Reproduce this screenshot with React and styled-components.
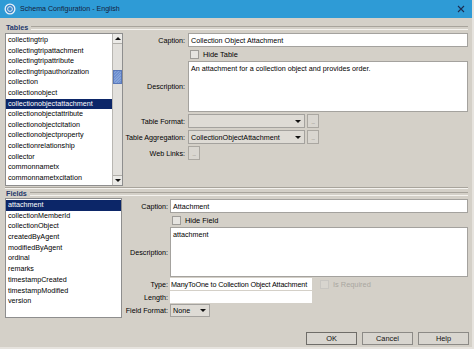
import React from "react";
import styled, { createGlobalStyle } from "styled-components";

const Global = createGlobalStyle`
  html, body { margin: 0; padding: 0; background: #d4d0c8; }
  body { font-family: "Liberation Sans", Arial, sans-serif; font-size: 7.2px; color: #000; }
  * { box-sizing: border-box; }
`;

const Window = styled.div`
  width: 474px;
  height: 349px;
  background: #d4d0c8;
  display: flex;
  flex-direction: column;
  border-right: 2px solid #e6e3de;
  border-bottom: 2px solid #e6e3de;
  overflow: hidden;
`;

const TitleBar = styled.div`
  height: 18px;
  background: #2e9bd6;
  display: flex;
  align-items: center;
  padding: 0 4px;
  gap: 4px;
  flex: none;
`;

const Title = styled.div`
  flex: 1;
  font-size: 7.1px;
  color: #14223c;
  white-space: nowrap;
`;

const CloseBox = styled.div`
  width: 12px;
  height: 12px;
  display: flex;
  align-items: center;
  justify-content: center;
  margin-right: 1px;
`;

const Body = styled.div`
  padding: 3px 4px 0 5px;
  display: flex;
  flex-direction: column;
`;

const SectionHeader = styled.div`
  height: ${(p) => p.$h || 12}px;
  display: flex;
  align-items: center;
  gap: 3px;
  font-weight: bold;
  color: #23386b;
  padding-left: 1px;
  &::after {
    content: "";
    flex: 1;
    height: 2px;
    border-top: 1px solid #a8a49c;
    border-bottom: 1px solid #f4f2ee;
    margin-top: 1px;
  }
`;

const Pane = styled.div`
  display: flex;
  height: ${(p) => p.$h}px;
`;

const ListBox = styled.div`
  width: ${(p) => p.$w}px;
  height: 100%;
  background: #fff;
  border: 1px solid #8e8e8e;
  display: flex;
  flex: none;
`;

const ListRows = styled.div`
  flex: 1;
  padding-top: 1px;
  overflow: hidden;
`;

const Row = styled.div`
  height: ${(p) => p.$rh}px;
  line-height: ${(p) => p.$rh}px;
  padding-left: 2px;
  white-space: nowrap;
  background: ${(p) => (p.$sel ? "#0c2668" : "transparent")};
  color: ${(p) => (p.$sel ? "#fff" : "#000")};
`;

const ScrollBar = styled.div`
  width: 10px;
  background: #e2e0dc;
  border-left: 1px solid #b8b6b2;
  display: flex;
  flex-direction: column;
`;

const ScrollBtn = styled.div`
  height: 10px;
  display: flex;
  align-items: center;
  justify-content: center;
  background: #ebeae7;
  border-bottom: ${(p) => (p.$up ? "1px solid #b0aea9" : "none")};
  border-top: ${(p) => (p.$up ? "none" : "1px solid #b0aea9")};
`;

const ScrollTrack = styled.div`
  flex: 1;
  padding-top: 26px;
`;

const Thumb = styled.div`
  height: 14px;
  background: repeating-linear-gradient(135deg, #6f90d0 0 1px, #86a4da 1px 2px);
  border: 1px solid #5a78b8;
`;

const Form = styled.div`
  display: grid;
  grid-template-columns: ${(p) => p.$label}px 1fr;
  column-gap: ${(p) => p.$gap}px;
  grid-template-rows: ${(p) => p.$rows};
  row-gap: ${(p) => p.$rg}px;
  flex: 1;
  align-content: start;
  padding-top: ${(p) => p.$pt || 0}px;
`;

const Label = styled.div`
  text-align: right;
  white-space: nowrap;
  align-self: center;
  color: #000;
`;

const Cell = styled.div`
  display: flex;
  align-items: center;
  gap: 2px;
  min-width: 0;
`;

const TextField = styled.div`
  background: #fff;
  border: 1px solid ${(p) => (p.$flat ? "#fff" : "#a4a29e")};
  height: 100%;
  width: ${(p) => (p.$w ? p.$w + "px" : "100%")};
  padding: 0 ${(p) => (p.$flat ? 0 : 2)}px;
  letter-spacing: ${(p) => (p.$flat ? "-0.12px" : "normal")};
  display: flex;
  align-items: center;
  white-space: nowrap;
  overflow: hidden;
  flex: none;
`;

const TextArea = styled.div`
  background: #fff;
  border: 1px solid #a4a29e;
  height: 100%;
  width: 100%;
  padding: 2px 2px;
`;

const Check = styled.span`
  width: 9px;
  height: 9px;
  border: 1px solid ${(p) => (p.$disabled ? "#c8c6c2" : "#9e9c98")};
  background: ${(p) => (p.$disabled ? "#d8d5cf" : "#e6e4e0")};
  display: inline-block;
  flex: none;
  margin-left: ${(p) => p.$ml || 0}px;
`;

const CheckText = styled.span`
  font-size: 7.4px;
  color: ${(p) => (p.$disabled ? "#a9a6a0" : "#000")};
  margin-left: 2px;
  white-space: nowrap;
`;

const Combo = styled.div`
  width: ${(p) => p.$w}px;
  height: 100%;
  border: 1px solid #a4a29e;
  background: #dedbd5;
  display: flex;
  align-items: center;
  padding-left: 2px;
  white-space: nowrap;
`;

const ComboText = styled.span`
  flex: 1;
`;

const Arrow = styled.span`
  width: 0;
  height: 0;
  border-left: 3px solid transparent;
  border-right: 3px solid transparent;
  border-top: ${(p) => (p.$up ? "none" : "3px solid #111")};
  border-bottom: ${(p) => (p.$up ? "3px solid #111" : "none")};
  margin-right: ${(p) => p.$mr || 0}px;
`;

const DotsBtn = styled.div`
  width: 12px;
  height: 100%;
  border: 1px solid #aaa7a1;
  background: #d9d6d0;
  color: #8a8781;
  display: flex;
  align-items: flex-end;
  justify-content: center;
  padding-bottom: 2px;
  font-size: 6px;
  line-height: 6px;
  letter-spacing: -0.5px;
`;

const Splitter = styled.div`
  height: 2px;
  margin: 1px 0 0 0;
  border-top: 1px solid #a8a49c;
  border-bottom: 1px solid #f4f2ee;
`;

const ButtonBar = styled.div`
  display: flex;
  justify-content: flex-end;
  gap: 5px;
  padding: 0 3px 0 0;
  margin-top: 14px;
`;

const Button = styled.div`
  width: 51px;
  height: 13px;
  border: 1px solid ${(p) => (p.$default ? "#6f6d69" : "#8c8a86")};
  background: #d8d5cf;
  display: flex;
  align-items: center;
  justify-content: center;
  font-size: 7.4px;
  color: #111;
`;

const tables = [
  "collectingtrip",
  "collectingtripattachment",
  "collectingtripattribute",
  "collectingtripauthorization",
  "collection",
  "collectionobject",
  "collectionobjectattachment",
  "collectionobjectattribute",
  "collectionobjectcitation",
  "collectionobjectproperty",
  "collectionrelationship",
  "collector",
  "commonnametx",
  "commonnametxcitation",
];

const fields = [
  "attachment",
  "collectionMemberId",
  "collectionObject",
  "createdByAgent",
  "modifiedByAgent",
  "ordinal",
  "remarks",
  "timestampCreated",
  "timestampModified",
  "version",
];

const Logo = () => (
  <svg width="12" height="12" viewBox="0 0 12 12">
    <circle cx="6" cy="6" r="5.5" fill="#e8f2fa" />
    <circle cx="6" cy="6" r="4.2" fill="#3b86c8" />
    <circle cx="6" cy="6" r="2.4" fill="none" stroke="#dbeaf6" strokeWidth="1" />
  </svg>
);

const CloseIcon = () => (
  <svg width="8" height="8" viewBox="0 0 8 8">
    <path d="M1 1 L7 7 M7 1 L1 7" stroke="#1b2d52" strokeWidth="1.1" />
  </svg>
);

export default function App() {
  return (
    <>
      <Global />
      <Window>
        <TitleBar>
          <Logo />
          <Title>Schema Configuration - English</Title>
          <CloseBox>
            <CloseIcon />
          </CloseBox>
        </TitleBar>
        <Body>
          <SectionHeader $h={12}>Tables</SectionHeader>
          <Pane $h={153}>
            <ListBox $w={118}>
              <ListRows>
                {tables.map((t, i) => (
                  <Row key={t} $rh={10.6} $sel={i === 6}>
                    {t}
                  </Row>
                ))}
              </ListRows>
              <ScrollBar>
                <ScrollBtn $up>
                  <Arrow $up />
                </ScrollBtn>
                <ScrollTrack>
                  <Thumb />
                </ScrollTrack>
                <ScrollBtn>
                  <Arrow />
                </ScrollBtn>
              </ScrollBar>
            </ListBox>
            <Form $label={62} $gap={3} $rg={2} $rows="14px 10px 51px 14px 14px 14px">
              <Label>Caption:</Label>
              <Cell>
                <TextField>Collection Object Attachment</TextField>
              </Cell>
              <div />
              <Cell>
                <Check $ml={2} />
                <CheckText>Hide Table</CheckText>
              </Cell>
              <Label>Description:</Label>
              <Cell>
                <TextArea>An attachment for a collection object and provides order.</TextArea>
              </Cell>
              <Label>Table Format:</Label>
              <Cell>
                <Combo $w={117}>
                  <ComboText />
                  <Arrow $mr={3} />
                </Combo>
                <DotsBtn>...</DotsBtn>
              </Cell>
              <Label>Table Aggregation:</Label>
              <Cell>
                <Combo $w={117}>
                  <ComboText>CollectionObjectAttachment</ComboText>
                  <Arrow $mr={3} />
                </Combo>
                <DotsBtn>...</DotsBtn>
              </Cell>
              <Label>Web Links:</Label>
              <Cell>
                <DotsBtn>...</DotsBtn>
              </Cell>
            </Form>
          </Pane>
          <Splitter />
          <SectionHeader $h={9}>Fields</SectionHeader>
          <Pane $h={120}>
            <ListBox $w={117}>
              <ListRows>
                {fields.map((f, i) => (
                  <Row key={f} $rh={10.7} $sel={i === 0}>
                    {f}
                  </Row>
                ))}
              </ListRows>
            </ListBox>
            <Form $label={46} $gap={2} $rg={1} $pt={1} $rows="14px 12px 50px 12px 12px 13px">
              <Label>Caption:</Label>
              <Cell>
                <TextField>Attachment</TextField>
              </Cell>
              <div />
              <Cell>
                <Check $ml={2} />
                <CheckText>Hide Field</CheckText>
              </Cell>
              <Label>Description:</Label>
              <Cell>
                <TextArea>attachment</TextArea>
              </Cell>
              <Label>Type:</Label>
              <Cell>
                <TextField $w={142} $flat>
                  ManyToOne to Collection Object Attachment
                </TextField>
                <Check $disabled $ml={6} />
                <CheckText $disabled>Is Required</CheckText>
              </Cell>
              <Label>Length:</Label>
              <Cell>
                <TextField $w={142} $flat />
              </Cell>
              <Label>Field Format:</Label>
              <Cell>
                <Combo $w={40}>
                  <ComboText>None</ComboText>
                  <Arrow $mr={3} />
                </Combo>
              </Cell>
            </Form>
          </Pane>
        </Body>
        <ButtonBar>
          <Button $default>OK</Button>
          <Button>Cancel</Button>
          <Button>Help</Button>
        </ButtonBar>
      </Window>
    </>
  );
}
